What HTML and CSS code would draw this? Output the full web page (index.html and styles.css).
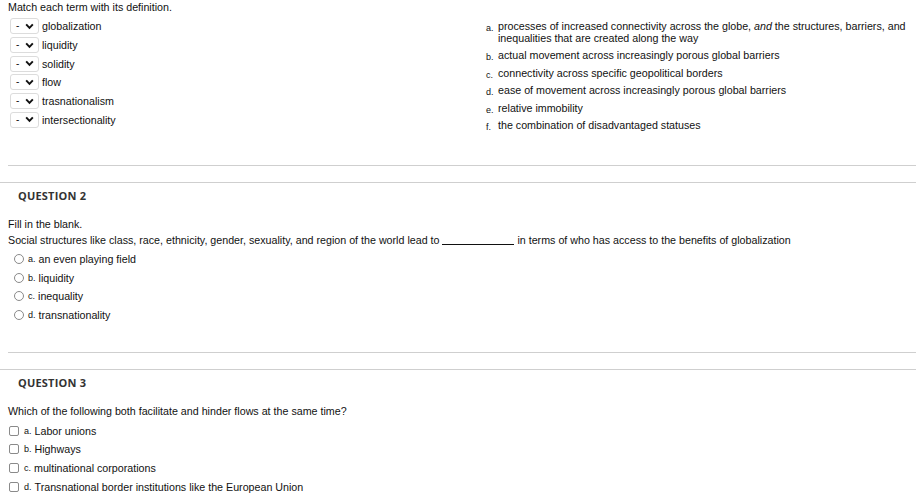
FILE: index.html
```html
<!DOCTYPE html>
<html>
<head>
<meta charset="utf-8">
<link rel="stylesheet" href="styles.css">
</head>
<body>
<div class="page">
  <section class="q1">
    <div class="prompt">Match each term with its definition.</div>
    <div class="match">
      <div class="terms">
        <div class="term"><span class="sel"><span class="dash">-</span><svg class="chev" viewBox="0 0 10 8" width="9" height="7"><path d="M1.2 1.5 L5 5.5 L8.8 1.5" fill="none" stroke="#111" stroke-width="2.2"/></svg></span><span>globalization</span></div>
        <div class="term"><span class="sel"><span class="dash">-</span><svg class="chev" viewBox="0 0 10 8" width="9" height="7"><path d="M1.2 1.5 L5 5.5 L8.8 1.5" fill="none" stroke="#111" stroke-width="2.2"/></svg></span><span>liquidity</span></div>
        <div class="term"><span class="sel"><span class="dash">-</span><svg class="chev" viewBox="0 0 10 8" width="9" height="7"><path d="M1.2 1.5 L5 5.5 L8.8 1.5" fill="none" stroke="#111" stroke-width="2.2"/></svg></span><span>solidity</span></div>
        <div class="term"><span class="sel"><span class="dash">-</span><svg class="chev" viewBox="0 0 10 8" width="9" height="7"><path d="M1.2 1.5 L5 5.5 L8.8 1.5" fill="none" stroke="#111" stroke-width="2.2"/></svg></span><span>flow</span></div>
        <div class="term"><span class="sel"><span class="dash">-</span><svg class="chev" viewBox="0 0 10 8" width="9" height="7"><path d="M1.2 1.5 L5 5.5 L8.8 1.5" fill="none" stroke="#111" stroke-width="2.2"/></svg></span><span>trasnationalism</span></div>
        <div class="term"><span class="sel"><span class="dash">-</span><svg class="chev" viewBox="0 0 10 8" width="9" height="7"><path d="M1.2 1.5 L5 5.5 L8.8 1.5" fill="none" stroke="#111" stroke-width="2.2"/></svg></span><span>intersectionality</span></div>
      </div>
      <div class="defs">
        <div class="def"><span class="let">a.</span><span class="dtext">processes of increased connectivity across the globe, <i>and</i> the structures, barriers, and inequalities that are created along the way</span></div>
        <div class="def"><span class="let">b.</span><span class="dtext">actual movement across increasingly porous global barriers</span></div>
        <div class="def"><span class="let">c.</span><span class="dtext">connectivity across specific geopolitical borders</span></div>
        <div class="def"><span class="let">d.</span><span class="dtext">ease of movement across increasingly porous global barriers</span></div>
        <div class="def"><span class="let">e.</span><span class="dtext">relative immobility</span></div>
        <div class="def"><span class="let">f.</span><span class="dtext">the combination of disadvantaged statuses</span></div>
      </div>
    </div>
  </section>
  <div class="rule-inner"></div>
  <div class="rule-outer"></div>

  <section class="q">
    <h2 class="qhead">QUESTION 2</h2>
    <div class="qtext">Fill in the blank.</div>
    <div class="qtext">Social structures like class, race, ethnicity, gender, sexuality, and region of the world lead to <span class="blank"></span> in terms of who has access to the benefits of globalization</div>
    <ul class="opts radios">
      <li><span class="radio"></span><span class="let">a.</span>an even playing field</li>
      <li><span class="radio"></span><span class="let">b.</span>liquidity</li>
      <li><span class="radio"></span><span class="let">c.</span>inequality</li>
      <li><span class="radio"></span><span class="let">d.</span>transnationality</li>
    </ul>
  </section>
  <div class="rule-inner r2"></div>
  <div class="rule-outer"></div>

  <section class="q">
    <h2 class="qhead">QUESTION 3</h2>
    <div class="qtext">Which of the following both facilitate and hinder flows at the same time?</div>
    <ul class="opts checks">
      <li><span class="check"></span><span class="let">a.</span>Labor unions</li>
      <li><span class="check"></span><span class="let">b.</span>Highways</li>
      <li><span class="check"></span><span class="let">c.</span>multinational corporations</li>
      <li><span class="check"></span><span class="let">d.</span>Transnational border institutions like the European Union</li>
    </ul>
  </section>
</div>
</body>
</html>
```
FILE: styles.css
```css
html, body {
  margin: 0;
  padding: 0;
  background: #fff;
}
body {
  font-family: "Liberation Sans", Arial, sans-serif;
  font-size: 10.7px;
  color: #111;
}
.page {
  width: 916px;
}
.q1 {
  padding-left: 8px;
}
.prompt {
  line-height: 12px;
  padding-top: 1px;
}
.match {
  display: flex;
  margin-top: 4px;
}
.terms {
  width: 476px;
  padding-left: 2px;
}
.term {
  display: flex;
  align-items: center;
  height: 18.7px;
}
.sel {
  display: inline-flex;
  align-items: center;
  justify-content: space-between;
  box-sizing: border-box;
  width: 29px;
  height: 16px;
  border: 1px solid #dcdcdc;
  border-radius: 3px;
  padding: 0 4px 0 5px;
  margin-right: 3px;
  font-size: 10px;
}
.dash {
  line-height: 10px;
}
.defs {
  padding-top: 2.5px;
  flex: 1;
  padding-right: 0;
}
.def {
  display: flex;
  align-items: baseline;
  line-height: 12px;
  margin-bottom: 5.5px;
}
.def .let {
  width: 12px;
  flex: none;
  line-height: 9px;
  position: relative;
  top: 1px;
}
.let {
  font-size: 9px;
}
.dtext {
  flex: 1;
}
.rule-inner {
  margin: 28px 0 0 8px;
  height: 1px;
  background: #cfcfcf;
}
.rule-inner.r2 {
  margin-top: 28px;
}
.rule-outer {
  margin-top: 16px;
  height: 1px;
  background: #cfcfcf;
}
.q {
  padding-left: 8px;
}
.qhead {
  margin: 0;
  padding: 6px 0 0 10px;
  font-family: "Open Sans", sans-serif;
  font-weight: 700;
  font-size: 11px;
  line-height: 14px;
  color: #333;
  letter-spacing: 0.2px;
}
.qtext {
  line-height: 16px;
}
.qhead + .qtext {
  margin-top: 13px;
}
.blank {
  display: inline-block;
  width: 72px;
  border-bottom: 1px solid #111;
  vertical-align: -1px;
  height: 9px;
}
.opts {
  list-style: none;
  margin: 2px 0 0 0;
  padding: 0;
}
.opts li {
  display: flex;
  align-items: center;
  height: 18.7px;
}
.opts .let {
  margin-right: 3px;
}
.radio {
  box-sizing: border-box;
  width: 10px;
  height: 10px;
  border: 1px solid #8a8a8a;
  border-radius: 50%;
  margin: 0 4px 0 6px;
}
.check {
  box-sizing: border-box;
  width: 10px;
  height: 10px;
  border: 1px solid #8a8a8a;
  border-radius: 2px;
  margin: 0 5px 0 1px;
}
```
